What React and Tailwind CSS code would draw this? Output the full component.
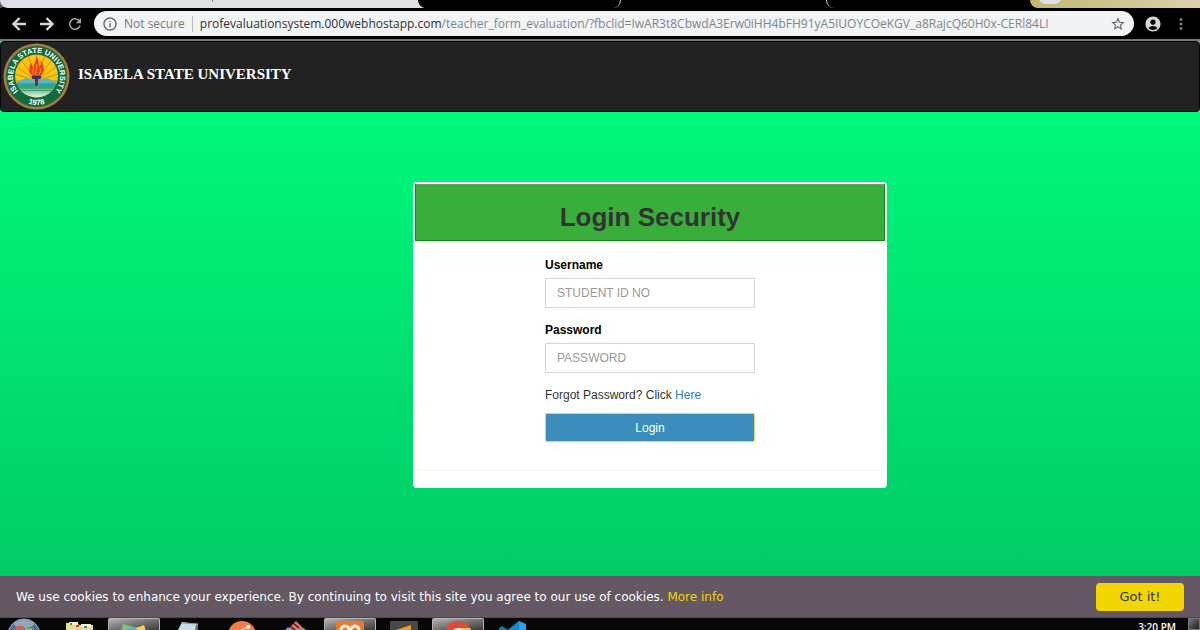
import { useState } from 'react';
import {
  MdRefresh,
  MdInfoOutline,
  MdStarBorder,
  MdAccountCircle,
  MdMoreVert,
} from 'react-icons/md';

const rays = [0, 18, 36, 54, 72, 90, 108, 126, 144, 162, 180];

const Seal = () => (
  <svg viewBox="0 0 134 134" className="h-[67px] w-[67px] shrink-0" role="img" aria-label="University seal">
    <defs>
      <path id="ringTop" d="M 32.6 99 A 47 47 0 1 1 101.4 99" />
      <path id="ringBottom" d="M 33.5 113 A 57 57 0 0 0 100.5 113" />
      <clipPath id="disc">
        <circle cx="67" cy="66" r="43" />
      </clipPath>
      <linearGradient id="field" x1="0" y1="0" x2="0" y2="1">
        <stop offset="0" stopColor="#2d9a5c" />
        <stop offset="1" stopColor="#f2faf2" />
      </linearGradient>
    </defs>
    <circle cx="67" cy="67" r="66" fill="#a67c42" />
    <circle cx="67" cy="67" r="61" fill="#136b3b" />
    <g clipPath="url(#disc)">
      <rect x="20" y="20" width="94" height="60" fill="#ffc50d" />
      {rays.map((a) => (
        <line
          key={a}
          x1="67"
          y1="76"
          x2={67 + 70 * Math.cos((a * Math.PI) / 180)}
          y2={76 - 70 * Math.sin((a * Math.PI) / 180)}
          stroke="#a47a12"
          strokeWidth="1.3"
        />
      ))}
      <path d="M20 82 L46 70 L67 78 L88 70 L114 82 Z" fill="#50b8c9" />
      <rect x="20" y="80" width="94" height="5" fill="#36a4b0" />
      <rect x="20" y="84" width="94" height="26" fill="url(#field)" />
      <path d="M20 90 H114 M24 95 H110" stroke="#2d925c" strokeWidth="1.5" />
    </g>
    <path d="M59 66 C48 58 54 48 55 39 C58 43 60 47 60 51 C61 41 66 37 67 28 C73 34 71 42 72 48 C75 44 76 41 75 35 C82 43 85 58 75 66 Z" fill="#ee3b24" />
    <path d="M61 63 C57 56 61 52 62 47 M67 64 C62 55 70 50 67 42 M72 63 C76 57 76 54 74 50" stroke="#ffb000" strokeWidth="2" fill="none" />
    <path d="M57 66 H77 L75 72 H70 L69 86 H65 L64 72 H59 Z" fill="#30306f" />
    <text fill="#fff" fontSize="15" fontWeight="700" fontFamily="Liberation Sans, sans-serif">
      <textPath href="#ringTop" startOffset="50%" textAnchor="middle">ISABELA STATE UNIVERSITY</textPath>
    </text>
    <text fill="#fff" fontSize="15" fontWeight="700" fontFamily="Liberation Sans, sans-serif">
      <textPath href="#ringBottom" startOffset="50%" textAnchor="middle">1978</textPath>
    </text>
  </svg>
);

const TabStrip = () => (
  <div className="flex h-2 shrink-0 overflow-hidden bg-black">
    <div className="w-1.5 rounded-br-lg bg-[#5d5f64]" />
    <div className="-ml-1.5 flex w-[424px] justify-center rounded-bl-lg bg-[#dee1e6]">
      <div className="h-[2px] w-px bg-[#85888d]" />
    </div>
    <div className="-ml-1.5 w-[203px] rounded-br-lg rounded-bl-lg border-r border-b-0 border-[#d0d2d5] bg-black" />
    <div className="ml-[205px] w-[204px] rounded-bl-lg border-l border-[#d0d2d5]" />
    <div className="flex-1 rounded-bl-lg bg-gradient-to-r from-[#c4b86f] to-[#d9d1ad]">
      <div className="-mt-3 ml-2 h-4 w-6 rounded-full bg-[#dee1e6]" />
    </div>
  </div>
);

const Arrow = ({ d }) => (
  <svg viewBox="0 0 18 18" className="h-4.5 w-4.5" fill="none" stroke="currentColor" strokeWidth="2.4">
    <path d={d} />
  </svg>
);

const Toolbar = () => (
  <div className="flex h-[31px] shrink-0 items-center bg-black pr-2.5 pl-2.5 text-[#d6d7d9]">
    <button type="button" aria-label="Back" className="mr-2.5">
      <Arrow d="M16 9 H4 M9.5 3 L3.5 9 L9.5 15" />
    </button>
    <button type="button" aria-label="Forward" className="mr-2.5">
      <Arrow d="M2 9 H14 M8.5 3 L14.5 9 L8.5 15" />
    </button>
    <button type="button" aria-label="Reload" className="mr-2.5 text-[#a5a6a9]"><MdRefresh size={18} /></button>
    <div className="flex h-[25px] min-w-0 flex-1 items-center rounded-full bg-[#f1f3f4] px-2 font-['Open_Sans',sans-serif] text-xs text-[#5f6368]">
      <MdInfoOutline size={16} className="shrink-0" />
      <span className="ml-1.5 shrink-0 text-[#777a7e]">Not secure</span>
      <span className="mx-[7px] h-4 w-px shrink-0 bg-[#b8babd]" />
      <span className="min-w-0 flex-1 truncate text-[#80868b]">
        <span className="text-[#303236]">profevaluationsystem.000webhostapp.com</span>
        /teacher_form_evaluation/?fbclid=IwAR3t8CbwdA3Erw0iHH4bFH91yA5IUOYCOeKGV_a8RajcQ60H0x-CERl84LI
      </span>
      <button type="button" aria-label="Bookmark" className="shrink-0"><MdStarBorder size={16} /></button>
    </div>
    <button type="button" aria-label="Profile" className="ml-2.5"><MdAccountCircle size={18} /></button>
    <button type="button" aria-label="Menu" className="ml-2.5 text-[#77787b]"><MdMoreVert size={18} /></button>
  </div>
);

const Field = ({ id, label, ...props }) => (
  <div className="mb-3.5">
    <label htmlFor={id} className="mb-[5px] block text-xs leading-4 font-bold text-black">{label}</label>
    <input
      id={id}
      className="block h-[30px] w-full border border-[#d2d6de] px-[11px] text-xs text-[#555] placeholder-[#999] outline-none"
      {...props}
    />
  </div>
);

const LoginCard = () => (
  <form
    className="w-[474px] rounded-sm border-2 border-white bg-white text-[#333]"
    onSubmit={(e) => e.preventDefault()}
  >
    <h1 className="border border-[#118a11] border-t-[#6f9d64] bg-[#3aae3a] pt-4 pb-[7px] text-center text-[26px] leading-8 font-bold">
      Login Security
    </h1>
    <div className="border-b border-[#f4f4f4] px-[130px] pt-4 pb-[27px]">
      <Field id="username" label="Username" type="text" placeholder="STUDENT ID NO" />
      <Field id="password" label="Password" type="password" placeholder="PASSWORD" />
      <p className="text-xs leading-4">
        Forgot Password? Click <a href="#forgot" className="text-[#337ab7]">Here</a>
      </p>
      <button
        type="submit"
        className="mt-2.5 block h-[29px] w-full rounded-xs border border-[#d3d878] bg-[#3c8dbc] text-xs text-white"
      >
        Login
      </button>
    </div>
    <div className="h-4" />
  </form>
);

const StartOrb = () => (
  <svg viewBox="0 0 32 12" className="h-3 w-8">
    <circle cx="16" cy="17" r="16" fill="#50708c" stroke="#a6bccb" />
    <ellipse cx="16" cy="6" rx="10" ry="4" fill="#a9bfd0" opacity=".7" />
    <path d="M8 9 Q12 6 16 9 V12 H7 Z" fill="#df6038" />
    <path d="M17 9 Q21 12 25 9 L24 12 H17 Z" fill="#8fbf48" />
  </svg>
);

const taskIcons = [
  {
    name: 'Explorer',
    art: (
      <>
        <path d="M2 5 H13 L15 7 H29 V12 H2 Z" fill="#ecd98d" />
        <path d="M5 4 H14 V7 H5 Z M17 6 H27 V9 H17 Z" fill="#faf2c8" />
        <path d="M6 5 H8 V7 H6 Z" fill="#20a83c" />
        <path d="M12 7 H15 V9 H12 Z" fill="#d8322a" />
        <path d="M20 8 H23 V10 H20 Z" fill="#2b8dd0" />
      </>
    ),
  },
  {
    name: 'Notes',
    active: true,
    art: (
      <>
        <path d="M5 5 L20 9 L18 12 H3 Z" fill="#75c86b" />
        <path d="M15 10 L26 6 L28 12 H14 Z" fill="#efd351" />
        <path d="M9 10 L17 8 L20 12 H9 Z" fill="#64a9db" />
      </>
    ),
  },
  {
    name: 'Notepad',
    art: (
      <>
        <path d="M10 4 L26 6 L24 12 H6 Z" fill="#c8dfe5" />
        <path d="M10 5 L26 6" stroke="#8c979c" strokeWidth="1" />
        <path d="M24 7 L26 7 L26 12 H23 Z" fill="#5f7479" />
      </>
    ),
  },
  {
    name: 'Postman',
    art: (
      <>
        <circle cx="16" cy="17" r="14" fill="#f47b43" />
        <circle cx="22" cy="9" r="2" fill="#fff" />
        <path d="M20 10 L15 12" stroke="#fff" strokeWidth="1" />
      </>
    ),
  },
  {
    name: 'Git',
    art: (
      <>
        <path d="M16 3 L23 10 L21 12 H7 Z" fill="#ec6d6b" />
        <path d="M10 8 L15 12 M13 5 L19 10" stroke="#252525" strokeWidth="1.5" />
        <path d="M5 12 L8 9 L11 12 Z" fill="#6d9ee8" />
        <path d="M23 10 L26 12 H21 Z" fill="#8bcf64" />
      </>
    ),
  },
  {
    name: 'XAMPP',
    active: true,
    art: (
      <>
        <rect x="2" y="2" width="28" height="15" rx="3" fill="#f37623" />
        <circle cx="11" cy="11" r="4" fill="none" stroke="#fff" strokeWidth="3" />
        <circle cx="21" cy="11" r="4" fill="none" stroke="#fff" strokeWidth="3" />
      </>
    ),
  },
  {
    name: 'Sublime Text',
    art: (
      <>
        <rect x="2" y="3" width="28" height="12" rx="1" fill="#484848" />
        <path d="M8 12 L23 7 V12 Z" fill="#ff9c0b" />
      </>
    ),
  },
  {
    name: 'Chrome',
    active: true,
    art: (
      <>
        <circle cx="16" cy="16" r="14" fill="#db4a3d" />
        <path d="M16 9 H28 L30 12 H16 Z" fill="#f5cb42" />
        <circle cx="16" cy="16" r="7" fill="#f3eeee" />
      </>
    ),
  },
  {
    name: 'VS Code',
    art: (
      <>
        <path d="M12 12 L23 3 L30 6 V12 Z" fill="#2aa3ec" />
        <path d="M3 10 L6 8 L12 12 H3 Z" fill="#1478bd" />
        <path d="M23 3 V12 H18 L12 12 Z" fill="#1788d0" />
      </>
    ),
  },
];

const Taskbar = () => (
  <div className="flex h-[13px] shrink-0 items-start overflow-hidden border-t border-[#4b484b] bg-[#080808] pl-2">
    <button type="button" aria-label="Start" className="mr-3.5"><StartOrb /></button>
    <div className="flex gap-0.5">
      {taskIcons.map(({ name, active, art }) => (
        <button
          key={name}
          type="button"
          aria-label={name}
          className={`flex h-3 w-13 justify-center ${
            active ? 'rounded-t-xs border border-b-0 border-[#b5b5b5] bg-gradient-to-br from-[#b4b4b4] to-[#393939]' : ''
          }`}
        >
          <svg viewBox="0 0 32 12" className="h-3 w-8 shrink-0">{art}</svg>
        </button>
      ))}
    </div>
    <time className="ml-auto pt-1 font-['Open_Sans',sans-serif] text-[10px] leading-none font-semibold text-white">3:20 PM</time>
    <div className="ml-3 h-3 w-3 border border-[#777] bg-gradient-to-br from-[#777] to-[#222]" />
  </div>
);

const App = () => {
  const [cookieBar, setCookieBar] = useState(true);

  return (
    <div className="flex h-screen flex-col overflow-hidden bg-black font-['Liberation_Sans',Arial,sans-serif]">
      <TabStrip />
      <Toolbar />
      <main className="flex min-h-0 flex-1 flex-col border-t-2 border-[#777] bg-gradient-to-b from-[#00ff80] to-[#00c864]">
        <nav className="flex h-[71px] shrink-0 items-center rounded-sm border border-[#080808] bg-[#222] pl-0.5">
          <Seal />
          <a href="#home" className="ml-2 pb-1 font-['Liberation_Serif',serif] text-[15px] font-bold text-white">
            ISABELA STATE UNIVERSITY
          </a>
        </nav>
        <div className="flex flex-1 items-start justify-center pt-[70px] pl-[100px]">
          <LoginCard />
        </div>
        {cookieBar && (
          <div className="flex h-[41px] shrink-0 items-center justify-between bg-[#645862] px-4 font-['DejaVu_Sans',Verdana,sans-serif] text-xs text-white">
            <p>
              We use cookies to enhance your experience. By continuing to visit this site you agree to our use of cookies.{' '}
              <a href="#cookies" className="text-[#f1d600]">More info</a>
            </p>
            <button
              type="button"
              className="h-7 w-22 rounded-sm bg-[#f1d600] text-[13px] text-[#333]"
              onClick={() => setCookieBar(false)}
            >
              Got it!
            </button>
          </div>
        )}
      </main>
      <Taskbar />
    </div>
  );
};

export default App;
